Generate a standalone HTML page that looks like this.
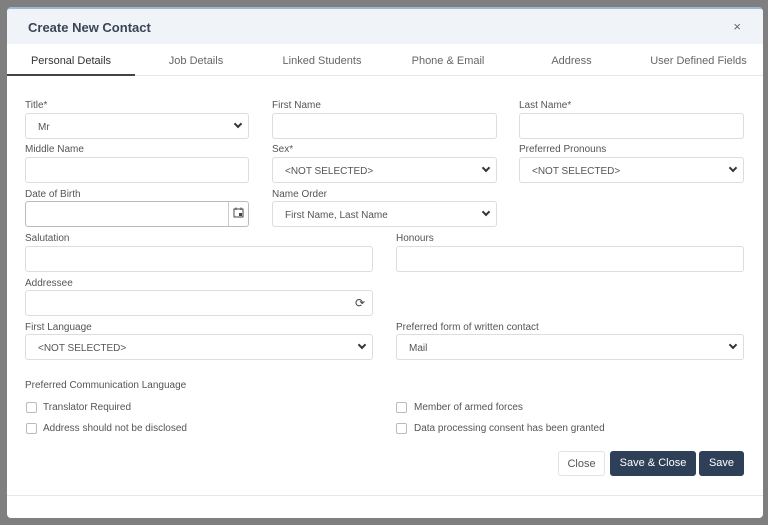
<!DOCTYPE html><html><head><style>
*{box-sizing:border-box;margin:0;padding:0}
body{width:768px;height:525px;background:#7f7f7f;font-family:"Liberation Sans",sans-serif;position:relative;overflow:hidden;color:#555}
.m{position:absolute;left:7px;top:7px;width:756px;height:511px;background:#fff;border-radius:4px;overflow:hidden;border-top:2px solid #9fb7d6}
.hd{position:absolute;left:0;top:0;width:756px;height:35px;background:#f0f3f8}
.hd b{position:absolute;left:21px;top:11px;font-size:13px;color:#3a4556}
.x{position:absolute;right:22px;top:10px;font-size:13px;color:#666}
.tab{position:absolute;top:46px;font-size:11px;color:#666;text-align:center}
.a{position:absolute}
.l{position:absolute;font-size:10px;color:#555}
.i{position:absolute;height:26px;border:1px solid #ddd;border-radius:3px;background:#fff;font-size:10px;color:#555;padding:8px 12px}
.chev{position:absolute;right:7px;top:7px;width:6px;height:6px;border-right:2px solid #333;border-bottom:2px solid #333;transform:rotate(45deg)}
.cb{position:absolute;width:11px;height:11px;border:1px solid #bbb;border-radius:2px}
.btn{position:absolute;top:451px;height:25px;border-radius:3px;font-size:11px;text-align:center;line-height:25px}
</style></head><body>
<div class="m">
<div class="hd"><b>Create New Contact</b><span class="x">×</span></div>
<div class="a" style="left:0;top:66px;width:756px;height:1px;background:#e6e6e6"></div>
<div class="a" style="left:0;top:65px;width:128px;height:2px;background:#444"></div>
<div class="tab" style="left:0;width:128px;color:#333">Personal Details</div>
<div class="tab" style="left:128px;width:122px">Job Details</div>
<div class="tab" style="left:250px;width:130px">Linked Students</div>
<div class="tab" style="left:380px;width:122px">Phone &amp; Email</div>
<div class="tab" style="left:502px;width:125px">Address</div>
<div class="tab" style="left:627px;width:129px">User Defined Fields</div>
</div>
<div class="l" style="left:25px;top:100px">Title*</div>
<div class="i" style="left:25px;top:113px;width:224px">Mr<span class="chev"></span></div>
<div class="l" style="left:272px;top:100px">First Name</div>
<div class="i" style="left:272px;top:113px;width:225px"></div>
<div class="l" style="left:519px;top:100px">Last Name*</div>
<div class="i" style="left:519px;top:113px;width:225px"></div>
<div class="l" style="left:25px;top:144px">Middle Name</div>
<div class="i" style="left:25px;top:157px;width:224px"></div>
<div class="l" style="left:272px;top:144px">Sex*</div>
<div class="i" style="left:272px;top:157px;width:225px">&lt;NOT SELECTED&gt;<span class="chev"></span></div>
<div class="l" style="left:519px;top:144px">Preferred Pronouns</div>
<div class="i" style="left:519px;top:157px;width:225px">&lt;NOT SELECTED&gt;<span class="chev"></span></div>
<div class="l" style="left:25px;top:189px">Date of Birth</div>
<div class="i" style="left:25px;top:201px;width:224px;border-color:#bbb"></div>
<div class="a" style="left:228px;top:202px;width:1px;height:24px;background:#ccc"></div>
<svg class="a" style="left:233px;top:207px" width="11" height="11" viewBox="0 0 11 11"><rect x="1" y="2" width="9" height="8" fill="none" stroke="#444"/><line x1="3" y1="0.5" x2="3" y2="3" stroke="#444"/><line x1="8" y1="0.5" x2="8" y2="3" stroke="#444"/><rect x="6" y="6" width="3" height="3" fill="#444"/></svg>
<div class="l" style="left:272px;top:189px">Name Order</div>
<div class="i" style="left:272px;top:201px;width:225px">First Name, Last Name<span class="chev"></span></div>
<div class="l" style="left:25px;top:233px">Salutation</div>
<div class="i" style="left:25px;top:246px;width:348px"></div>
<div class="l" style="left:396px;top:233px">Honours</div>
<div class="i" style="left:396px;top:246px;width:348px"></div>
<div class="l" style="left:25px;top:278px">Addressee</div>
<div class="i" style="left:25px;top:290px;width:348px"><span style="position:absolute;right:7px;top:5px;font-size:12px;color:#444">⟳</span></div>
<div class="l" style="left:25px;top:322px">First Language</div>
<div class="i" style="left:25px;top:334px;width:348px">&lt;NOT SELECTED&gt;<span class="chev"></span></div>
<div class="l" style="left:396px;top:322px">Preferred form of written contact</div>
<div class="i" style="left:396px;top:334px;width:348px">Mail<span class="chev"></span></div>
<div class="l" style="left:25px;top:380px">Preferred Communication Language</div>
<div class="cb" style="left:26px;top:402px"></div><div class="l" style="left:43px;top:402px">Translator Required</div>
<div class="cb" style="left:26px;top:423px"></div><div class="l" style="left:43px;top:423px">Address should not be disclosed</div>
<div class="cb" style="left:396px;top:402px"></div><div class="l" style="left:414px;top:402px">Member of armed forces</div>
<div class="cb" style="left:396px;top:423px"></div><div class="l" style="left:414px;top:423px">Data processing consent has been granted</div>
<div class="btn" style="left:558px;width:47px;border:1px solid #e3e3e3;color:#555">Close</div>
<div class="btn" style="left:610px;width:86px;background:#2e4057;color:#fff">Save &amp; Close</div>
<div class="btn" style="left:699px;width:45px;background:#2e4057;color:#fff">Save</div>
<div class="a" style="left:7px;top:495px;width:756px;height:1px;background:#e8e8e8"></div>
</body></html>
